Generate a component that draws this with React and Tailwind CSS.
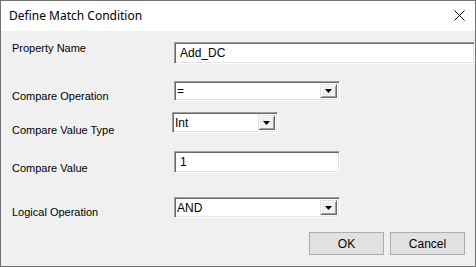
import { useState } from 'react';

const sunken =
  'border border-t-[#a0a0a0] border-l-[#a0a0a0] border-b-white border-r-white shadow-[inset_1px_1px_0_#696969,inset_-1px_-1px_0_#e3e3e3] bg-white';

const DropArrow = () => (
  <div className="w-[17px] h-full flex items-center justify-center bg-[#f0f0f0] border border-t-[#e3e3e3] border-l-[#e3e3e3] border-b-[#696969] border-r-[#696969] shadow-[inset_1px_1px_0_#ffffff,inset_-1px_-1px_0_#a0a0a0]">
    <svg width="7" height="4" viewBox="0 0 7 4">
      <path d="M0 0h7L3.5 4z" fill="#000" />
    </svg>
  </div>
);

const TextBox = ({ value, width, height }) => (
  <div className={`${sunken} flex items-center pl-[5px] text-[12px] text-black`} style={{ width, height }}>
    {value}
  </div>
);

const Select = ({ value, width, height }) => (
  <div className={`${sunken} flex items-stretch p-[2px] text-[12px] text-black`} style={{ width, height }}>
    <span className="flex-1 flex items-center leading-none">{value}</span>
    <DropArrow />
  </div>
);

// row height is fixed to the control's height, the label may hang below it
const Row = ({ label, labelTop, rowTop, height, labelWidth = 162, children }) => (
  <div className="flex items-start shrink-0" style={{ marginTop: rowTop, height }}>
    <div className="shrink-0 text-[11px] leading-[13px] text-black whitespace-nowrap" style={{ width: labelWidth, marginTop: labelTop }}>
      {label}
    </div>
    {children}
  </div>
);

export default function App() {
  const [name] = useState('Add_DC');

  return (
    <div className="w-[476px] h-[267px] border border-[#6f6f6f] bg-[#f0f0f0] flex flex-col overflow-hidden font-['Liberation_Sans',Arial,sans-serif]">
      {/* Title bar */}
      <div className="h-[30px] bg-white flex items-center justify-between pl-[8px] pr-[10px] shrink-0">
        <span className="text-[12px] text-black font-['Noto_Sans','Liberation_Sans',sans-serif]">Define Match Condition</span>
        <svg width="11" height="11" viewBox="0 0 11 11" className="mb-[1px]">
          <path d="M0.5 0.5L10.5 10.5M10.5 0.5L0.5 10.5" stroke="#000" strokeWidth="1" />
        </svg>
      </div>

      {/* Form */}
      <div className="pl-[11px] flex flex-col">
        <Row label="Property Name" rowTop={11} height={22} labelTop={0}>
          <TextBox value={name} width={320} height={22} />
        </Row>
        <Row label="Compare Operation" rowTop={17} height={20} labelTop={9}>
          <Select value="=" width={166} height={20} />
        </Row>
        <Row label="Compare Value Type" rowTop={11} height={21} labelTop={12} labelWidth={160}>
          <Select value="Int" width={106} height={21} />
        </Row>
        <Row label="Compare Value" rowTop={18} height={22} labelTop={11}>
          <TextBox value="1" width={166} height={22} />
        </Row>
        <Row label="Logical Operation" rowTop={24} height={21} labelTop={9}>
          <Select value="AND" width={166} height={21} />
        </Row>

        <div className="flex justify-end gap-[6px] mt-[14px] pr-[10px] text-[12px] text-black">
          <button className="w-[75px] h-[23px] bg-[#e1e1e1] border border-[#adadad]">OK</button>
          <button className="w-[75px] h-[23px] bg-[#e1e1e1] border border-[#adadad]">Cancel</button>
        </div>
      </div>
    </div>
  );
}
